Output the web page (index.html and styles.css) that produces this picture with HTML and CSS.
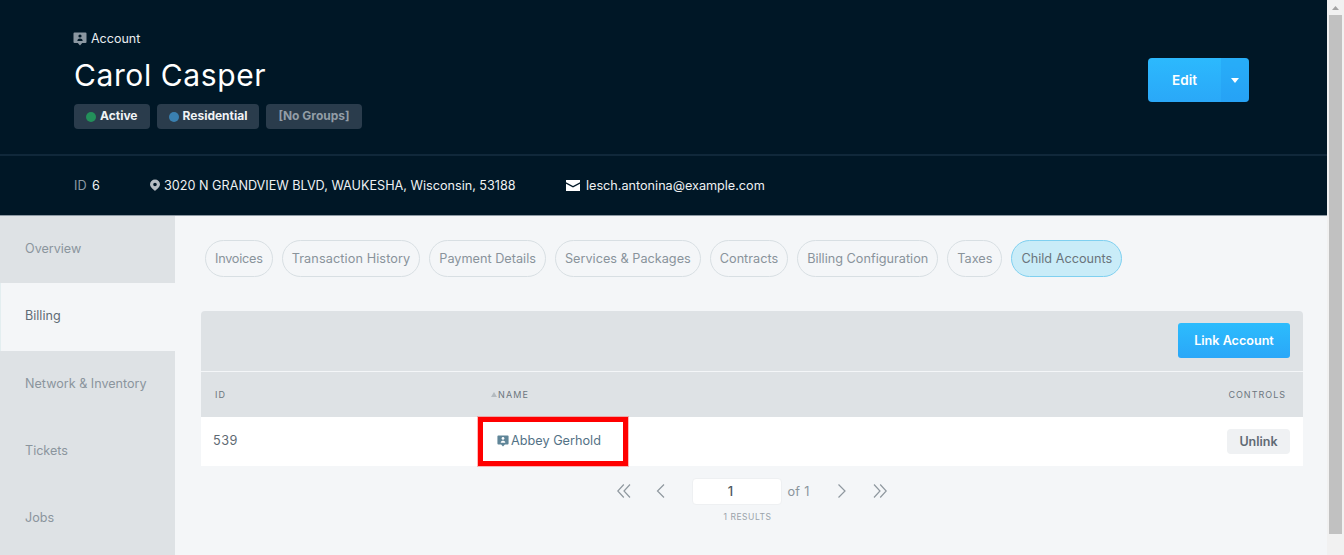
FILE: index.html
```html
<!DOCTYPE html>
<html lang="en">
<head>
<meta charset="utf-8">
<title>Carol Casper</title>
<link rel="stylesheet" href="styles.css">
</head>
<body>
<div class="page">
  <div class="main">
    <header class="hero">
      <div class="hero-top">
        <div class="hero-info">
          <div class="kind">
            <svg class="acct-icon" viewBox="0 0 14 14"><path d="M1.500 .5h11a1 1 0 0 1 1 1v8.500a1 1 0 0 1-1 1H9.200L7 13.500 4.800 11H1.500a1 1 0 0 1-1-1V1.500a1 1 0 0 1 1-1z" fill="currentColor"/><circle cx="7" cy="4" r="1.600" fill="#001726"/><path d="M4.300 9c.2-1.700 1.300-2.400 2.700-2.400S9.500 7.300 9.700 9z" fill="#001726"/></svg>
            <span>Account</span>
          </div>
          <h1 class="name">Carol Casper</h1>
          <div class="tags">
            <span class="tag"><i class="dot dot-green"></i>Active</span>
            <span class="tag"><i class="dot dot-blue"></i>Residential</span>
            <span class="tag tag-muted">[No Groups]</span>
          </div>
        </div>
        <div class="split-btn">
          <span class="split-main">Edit</span>
          <span class="split-caret"><svg viewBox="0 0 8 5" class="caret"><path d="M0 0h8L4 5z" fill="#fff"/></svg></span>
        </div>
      </div>
      <div class="hero-bottom">
        <span class="meta-id"><span class="id-label">ID</span> 6</span>
        <span class="meta-addr">
          <svg class="pin" viewBox="0 0 12 12"><path fill-rule="evenodd" d="M6 .5a5 5 0 0 1 5 5C11 8.300 6 11.800 6 11.800S1 8.300 1 5.500A5 5 0 0 1 6 .5zm0 3.200a1.800 1.800 0 1 0 0 3.600 1.800 1.800 0 0 0 0-3.600z" fill="#b5bcc2"/></svg>
          3020 N GRANDVIEW BLVD, WAUKESHA, Wisconsin, 53188
        </span>
        <span class="meta-mail">
          <svg class="mail" viewBox="0 0 14 11"><path d="M0 0h14v2.200L7 6 0 2.200z" fill="#fff"/><path d="M0 3.800 7 7.600l7-3.800V11H0z" fill="#fff"/></svg>
          lesch.antonina@example.com
        </span>
      </div>
    </header>
    <div class="content">
      <nav class="side">
        <a class="side-item">Overview</a>
        <a class="side-item active">Billing</a>
        <a class="side-item">Network &amp; Inventory</a>
        <a class="side-item">Tickets</a>
        <a class="side-item">Jobs</a>
      </nav>
      <section class="panel">
        <div class="pills">
          <span class="pill pill-tight">Invoices</span>
          <span class="pill pill-wide">Transaction History</span>
          <span class="pill">Payment Details</span>
          <span class="pill">Services &amp; Packages</span>
          <span class="pill">Contracts</span>
          <span class="pill">Billing Configuration</span>
          <span class="pill">Taxes</span>
          <span class="pill pill-on">Child Accounts</span>
        </div>
        <div class="toolbar"><span class="btn-link">Link Account</span></div>
        <div class="row head">
          <span class="c-id">ID</span>
          <span class="c-name"><svg class="sort" viewBox="0 0 6 5"><path d="M3 0l3 5H0z" fill="#b4bbc0"/></svg>NAME</span>
          <span class="c-ctl">CONTROLS</span>
        </div>
        <div class="row body">
          <span class="c-id">539</span>
          <span class="c-name link">
            <svg class="acct-icon small" viewBox="0 0 14 14"><path d="M1.500 .5h11a1 1 0 0 1 1 1v8.500a1 1 0 0 1-1 1H9.200L7 13.500 4.800 11H1.500a1 1 0 0 1-1-1V1.500a1 1 0 0 1 1-1z" fill="#5f8598"/><circle cx="7" cy="4" r="1.600" fill="#fff"/><path d="M4.300 9c.2-1.700 1.300-2.400 2.700-2.400S9.500 7.300 9.700 9z" fill="#fff"/></svg>
            Abbey Gerhold
            <span class="highlight"></span>
          </span>
          <span class="c-ctl"><span class="btn-unlink">Unlink</span></span>
        </div>
        <div class="pager">
          <svg class="pg" viewBox="0 0 14 14"><path d="M6.800 .5.800 7l6 6.500M13 .5 7 7l6 6.500" /></svg>
          <svg class="pg" viewBox="0 0 14 14"><path d="M10 .5 3.500 7l6.500 6.500" /></svg>
          <span class="pg-input">1</span>
          <span class="pg-of">of 1</span>
          <svg class="pg" viewBox="0 0 14 14"><path d="M3.500 .5 10 7l-6.500 6.500" /></svg>
          <svg class="pg" viewBox="0 0 14 14"><path d="M1 .5 7 7l-6 6.500M7.200 .5l6 6.500-6 6.500" /></svg>
        </div>
        <div class="results">1 RESULTS</div>
      </section>
    </div>
  </div>
  <div class="scrollbar">
    <svg class="sb-arrow" viewBox="0 0 7 4"><path d="M3.500 0 7 4H0z" fill="#a3a3a3"/></svg>
    <div class="sb-thumb"></div>
  </div>
</div>
</body>
</html>
```
FILE: styles.css
```css
* { box-sizing: border-box; }
html, body { margin: 0; height: 100%; overflow: hidden; }
body { font-family: Inter, "Liberation Sans", sans-serif; color: #fff; background: #f4f6f8; }
.page { display: flex; height: 555px; overflow: hidden; }
.main { flex: 1; min-width: 0; display: flex; flex-direction: column; }
.scrollbar { width: 17px; flex: none; background: #f1f1f1; display: flex; flex-direction: column; align-items: center; padding-top: 6px; }
.sb-arrow { width: 7px; height: 4px; flex: none; }
.sb-thumb { width: 13px; height: 519px; margin-top: 5px; background: #c1c1c1; }

.hero { background: #001726; height: 216px; flex: none; border-bottom: 1px solid #8d99a3; }
.hero-top { height: 156px; padding: 30px 78px 0 74px; display: flex; justify-content: space-between; border-bottom: 2px solid #10283a; }
.kind { display: flex; align-items: center; gap: 4px; font-size: 12.500px; line-height: 18px; color: #e8ecef; }
.acct-icon { width: 14px; height: 14px; color: #8b97a1; margin-left: -1px; }
.name { margin: 6px 0 0; font: 400 30px/42px Inter, sans-serif; letter-spacing: .6px; color: #fff; }
.tags { display: flex; gap: 7px; margin-top: 8px; }
.tag { height: 25px; padding: 0 12px 2px; display: flex; align-items: center; background: #2a3c4c; border-radius: 4px; font-size: 12px; font-weight: 700; color: #f0f3f5; }
.tag-muted { color: #929da6; }
.dot { width: 10px; height: 10px; border-radius: 50%; margin: 2px 4px 0 0; }
.dot-green { background: #23905a; }
.dot-blue { background: #3a80b0; }
.split-btn { display: flex; width: 101px; height: 44px; margin-top: 28px; border-radius: 4px; overflow: hidden; background: linear-gradient(#2cb9fd, #2aa8f8); font-size: 13.500px; font-weight: 600; }
.split-main { flex: 1; display: flex; align-items: center; justify-content: center; }
.split-caret { width: 28px; display: flex; align-items: center; justify-content: center; background: rgba(30, 150, 240, .3); }
.caret { width: 8px; height: 5px; }

.hero-bottom { height: 59px; padding: 0 0 1px 74px; display: flex; align-items: center; font-size: 12.650px; color: #eef1f3; }
.meta-id { width: 75px; }
.id-label { color: #8e9aa4; margin-right: 2px; }
.meta-addr { display: flex; align-items: center; gap: 3px; width: 417px; }
.pin { width: 12px; height: 12px; }
.meta-mail { display: flex; align-items: center; gap: 6px; }
.mail { width: 14px; height: 11px; }

.content { flex: 1; display: flex; min-height: 0; }
.side { width: 175px; flex: none; background: #dee2e5; display: flex; flex-direction: column; }
.side-item { height: 67.300px; flex: none; padding: 0 0 2px 25px; display: flex; align-items: center; font-size: 12.600px; color: #8b959d; }
.side-item.active { background: #f4f6f8; color: #5f6c75; border-left: 1px solid #e3eef0; padding-left: 24px; }
.panel { flex: 1; min-width: 0; padding: 24px 24px 0 26px; color: #6d7880; }
.pills { display: flex; gap: 9px; margin-left: 4px; }
.pill { height: 37px; padding: 0 9px 1px; display: flex; align-items: center; border: 1px solid #d8dfe3; border-radius: 19px; font-size: 12.700px; color: #89939b; }
.pill-tight { letter-spacing: -.25px; }
.pill-wide { letter-spacing: .1px; }
.pill-on { background: #c9ecf8; border-color: #7fd0f0; color: #69747c; }
.toolbar { margin-top: 34px; height: 60px; background: #dee2e5; border-radius: 4px 4px 0 0; display: flex; align-items: center; justify-content: flex-end; padding: 0 13px 2px; }
.btn-link { width: 112px; height: 35px; border-radius: 3px; background: linear-gradient(#2cbcfd, #2aa7f8); color: #fff; font-size: 12.600px; font-weight: 600; display: flex; align-items: center; justify-content: center; }
.row { display: flex; align-items: center; }
.head { margin-top: 1px; height: 45px; background: #dee2e5; font-size: 9px; letter-spacing: 1.100px; color: #6c767e; }
.head .c-ctl { padding-right: 17px; letter-spacing: 1px; }
.body { height: 49px; padding-bottom: 2px; background: #fff; font-size: 12.700px; }
.c-id { width: 290px; padding-left: 14px; }
.body .c-id { padding-left: 12px; color: #5e6a73; letter-spacing: .5px; }
.c-name { flex: 1; display: flex; align-items: center; }
.c-ctl { padding-right: 13px; }
.sort { width: 6px; height: 5px; margin-right: 1px; }
.link { position: relative; color: #537286; gap: 2px; padding-left: 6px; }
.acct-icon.small { width: 12px; height: 12px; margin-left: 0; }
.highlight { position: absolute; left: -13px; top: -16px; width: 150px; height: 49px; border: 5px solid #f00; box-shadow: 0 0 0 1px rgba(255, 80, 80, .4); pointer-events: none; }
.btn-unlink { display: flex; align-items: center; justify-content: center; width: 63px; height: 25px; margin-top: 1px; background: #eff1f3; border-radius: 4px; color: #5f6a73; font-size: 12.500px; font-weight: 600; }

.pager { display: flex; align-items: center; justify-content: center; height: 28px; margin-top: 11px; color: #8a949c; font-size: 13px; }
.pg { width: 14px; height: 14px; flex: none; fill: none; stroke: #8f989f; stroke-width: 1.200; }
.pg + .pg { margin-left: 23px; }
.pg-input { width: 90px; height: 27px; margin-left: 24px; padding-right: 14px; background: #fff; border: 1px solid #eef0f2; border-radius: 4px; display: flex; align-items: center; justify-content: center; color: #4c5860; font-size: 13px; font-weight: 500; }
.pg-of { margin: 0 25px 0 5px; font-size: 12.700px; letter-spacing: .3px; }
.pg-of + .pg + .pg { margin-left: 24px; }
.results { margin-top: 7px; padding-right: 9px; text-align: center; font-size: 8.500px; letter-spacing: .55px; color: #9aa3aa; }
```
